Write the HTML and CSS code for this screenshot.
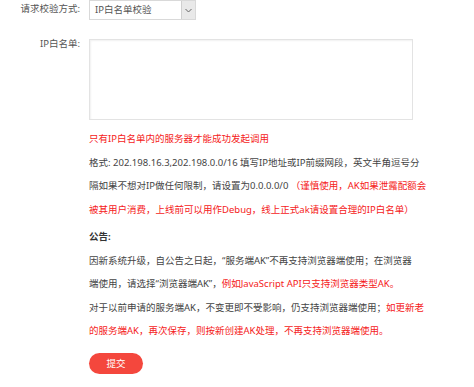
FILE: index.html
```html
<!DOCTYPE html>
<html lang="zh-CN">
<head>
<meta charset="utf-8">
<link rel="stylesheet" href="styles.css">
</head>
<body>
<div class="form">
  <div class="row row-select">
    <div class="label">请求校验方式:</div>
    <div class="select">
      <span class="select-text">IP白名单校验</span>
      <span class="select-arrow"><svg width="7" height="5" viewBox="0 0 7 5"><path d="M0.5 1 L3.5 4 L6.5 1" fill="none" stroke="#666" stroke-width="1"/></svg></span>
    </div>
  </div>
  <div class="row row-area">
    <div class="label label-area">IP白名单:</div>
    <div class="field">
      <div class="textarea"></div>
      <p class="note red">只有IP白名单内的服务器才能成功发起调用</p>
      <p class="text">格式: 202.198.16.3,202.198.0.0/16 填写IP地址或IP前缀网段，英文半角逗号分<br>隔如果不想对IP做任何限制，请设置为0.0.0.0/0 <span class="red">（谨慎使用，AK如果泄露配额会<br>被其用户消费，上线前可以用作Debug，线上正式ak请设置合理的IP白名单）</span></p>
      <p class="notice-title">公告:</p>
      <p class="text">因新系统升级，自公告之日起，“服务端AK”不再支持浏览器端使用；在浏览器<br>端使用，请选择“浏览器端AK”，<span class="red">例如JavaScript API只支持浏览器类型AK。</span><br>对于以前申请的服务端AK，不变更即不受影响，仍支持浏览器端使用；<span class="red">如更新老<br>的服务端AK，再次保存，则按新创建AK处理，不再支持浏览器端使用。</span></p>
      <button class="submit">提交</button>
    </div>
  </div>
</div>
</body>
</html>
```
FILE: styles.css
```css
html, body {
  margin: 0;
  padding: 0;
  background: #fff;
}
body {
  font-family: "Noto Sans", "Noto Sans CJK SC", sans-serif;
  font-size: 9.5px;
  color: #444;
}
.form {
  display: flex;
  flex-direction: column;
}
.row {
  display: flex;
  gap: 9px;
}
.label {
  width: 80px;
  text-align: right;
  color: #555;
  flex-shrink: 0;
}
.row-select {
  align-items: center;
  height: 20px;
}
.row-select .label {
  line-height: 20px;
  margin-top: -2px;
}
.select {
  width: 107px;
  height: 20px;
  box-sizing: border-box;
  border: 1px solid #d9d9d9;
  display: flex;
  align-items: stretch;
  background: #fff;
}
.select-text {
  flex: 1;
  padding-left: 5px;
  line-height: 17px;
  color: #555;
}
.select-arrow {
  width: 13px;
  background: #e9e9e9;
  border-left: 1px solid #d0d0d0;
  display: flex;
  align-items: center;
  justify-content: center;
}
.row-area {
  margin-top: 19px;
}
.label-area {
  line-height: 12px;
  margin-top: -1px;
}
.field {
  width: 340px;
  display: flex;
  flex-direction: column;
  align-items: flex-start;
}
.textarea {
  width: 324px;
  height: 81px;
  box-sizing: border-box;
  border: 1px solid #e3e3e3;
  box-shadow: inset 1px 1px 2px rgba(0,0,0,0.06);
}
p {
  margin: 0;
  line-height: 23.5px;
  white-space: nowrap;
}
.note {
  margin-top: 7px;
}
.red {
  color: #f51a1a;
}
.notice-title {
  margin-top: 4px;
  font-weight: bold;
  color: #333;
}
.submit {
  margin-top: 10px;
  width: 54px;
  height: 21px;
  border: none;
  border-radius: 11px;
  background: #f4473d;
  color: #fff;
  font-family: inherit;
  font-size: 9.5px;
  padding: 0;
  line-height: 21px;
}
```
